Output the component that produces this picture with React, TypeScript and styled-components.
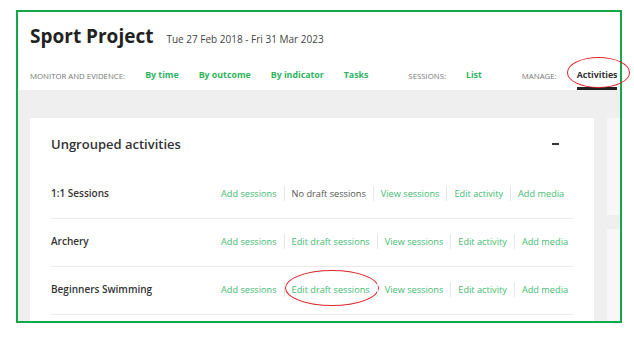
import React from 'react'
import styled, { createGlobalStyle } from 'styled-components'

const GlobalStyle = createGlobalStyle`
    html, body {
        margin: 0;
        padding: 0;
        background: #fff;
        font-family: 'Open Sans', 'Liberation Sans', sans-serif;
    }
`

type Action = { label: string; muted?: boolean; circled?: boolean }
type Activity = { name: string; actions: Action[] }

const activities: Activity[] = [
    {
        name: '1:1 Sessions',
        actions: [
            { label: 'Add sessions' },
            { label: 'No draft sessions', muted: true },
            { label: 'View sessions' },
            { label: 'Edit activity' },
            { label: 'Add media' },
        ],
    },
    {
        name: 'Archery',
        actions: [
            { label: 'Add sessions' },
            { label: 'Edit draft sessions' },
            { label: 'View sessions' },
            { label: 'Edit activity' },
            { label: 'Add media' },
        ],
    },
    {
        name: 'Beginners Swimming',
        actions: [
            { label: 'Add sessions' },
            { label: 'Edit draft sessions', circled: true },
            { label: 'View sessions' },
            { label: 'Edit activity' },
            { label: 'Add media' },
        ],
    },
]

const App = () => {
    return (
        <Page>
            <GlobalStyle />
            <Frame>
                <Header>
                    <TitleRow>
                        <Title>Sport Project</Title>
                        <Dates>Tue 27 Feb 2018 - Fri 31 Mar 2023</Dates>
                    </TitleRow>
                    <Nav>
                        <NavGroup>
                            <NavLabel>Monitor and evidence:</NavLabel>
                            <NavLink>By time</NavLink>
                            <NavLink>By outcome</NavLink>
                            <NavLink>By indicator</NavLink>
                            <NavLink>Tasks</NavLink>
                        </NavGroup>
                        <NavGroup>
                            <NavLabel>Sessions:</NavLabel>
                            <NavLink>List</NavLink>
                        </NavGroup>
                        <NavGroup>
                            <NavLabel>Manage:</NavLabel>
                            <NavLink $active>
                                Activities
                                <NavCircle />
                            </NavLink>
                        </NavGroup>
                    </Nav>
                </Header>
                <Body>
                    <Card>
                        <CardHeader>
                            <CardTitle>Ungrouped activities</CardTitle>
                            <Collapse />
                        </CardHeader>
                        {activities.map((a) => (
                            <Row key={a.name}>
                                <RowName>{a.name}</RowName>
                                <Actions>
                                    {a.actions.map((act) => (
                                        <ActionLink key={act.label} $muted={act.muted}>
                                            {act.label}
                                            {act.circled && <ActionCircle />}
                                        </ActionLink>
                                    ))}
                                </Actions>
                            </Row>
                        ))}
                    </Card>
                    <Side>
                        <SideCard $height={127} />
                        <SideCard $height={120} />
                    </Side>
                </Body>
            </Frame>
        </Page>
    )
}

export default App

const Page = styled.div`
    padding: 10px 0 0 16px;
    width: 634px;
    height: 339px;
    box-sizing: border-box;
`

const Frame = styled.div`
    width: 606px;
    height: 313px;
    box-sizing: border-box;
    border: 2px solid #12a84a;
    display: flex;
    flex-direction: column;
`

const Header = styled.div`
    background: #fff;
    padding: 0 12px;
    white-space: nowrap;
`

const TitleRow = styled.div`
    display: flex;
    align-items: baseline;
    gap: 13px;
    padding-top: 10px;
    height: 38px;
    box-sizing: border-box;
`

const Title = styled.h1`
    margin: 0;
    font-size: 19px;
    font-weight: 700;
    color: #222;
    line-height: 28px;
`

const Dates = styled.span`
    font-size: 10px;
    color: #444;
`

const Nav = styled.div`
    display: flex;
    gap: 40px;
    height: 40px;
`

const NavGroup = styled.div`
    display: flex;
    gap: 20px;
    align-items: stretch;
`

const NavLabel = styled.span`
    display: flex;
    align-items: center;
    padding-top: 14px;
    padding-bottom: 3px;
    font-size: 7.8px;
    text-transform: uppercase;
    color: #777;
`

const NavLink = styled.span<{ $active?: boolean }>`
    position: relative;
    display: flex;
    align-items: center;
    padding-top: 12px;
    font-size: 8.8px;
    font-weight: 700;
    color: ${(p) => (p.$active ? '#333' : '#2fb45f')};
    border-bottom: 3px solid ${(p) => (p.$active ? '#222' : 'transparent')};
`

const NavCircle = styled.span`
    position: absolute;
    left: -10px;
    right: -13px;
    top: 7px;
    bottom: -1px;
    border: 1px solid #e0262b;
    border-radius: 50%;
`

const Body = styled.div`
    flex: 1;
    overflow: hidden;
    background: #efefef;
    display: flex;
    gap: 13px;
    padding: 28px 0 0 12px;
`

const Card = styled.div`
    width: 564px;
    flex-shrink: 0;
    background: #fff;
    padding: 0 21px;
    box-sizing: border-box;
`

const CardHeader = styled.div`
    display: flex;
    align-items: center;
    justify-content: space-between;
    height: 53px;
    padding: 0 14px 2px 0;
    box-sizing: border-box;
`

const CardTitle = styled.h2`
    margin: 0;
    font-size: 13px;
    font-weight: 600;
    color: #333;
`

const Collapse = styled.span`
    width: 7px;
    height: 2px;
    background: #333;
`

const Row = styled.div`
    display: flex;
    align-items: center;
    height: 48px;
    box-sizing: border-box;
    padding-bottom: 3px;
    border-bottom: 1px solid #ebebeb;
    white-space: nowrap;
`

const RowName = styled.span`
    width: 170px;
    flex-shrink: 0;
    font-size: 10px;
    font-weight: 600;
    color: #333;
`

const Actions = styled.div`
    display: flex;
    align-items: center;
`

const ActionLink = styled.span<{ $muted?: boolean }>`
    position: relative;
    font-size: 9.2px;
    line-height: 15px;
    padding: 0 7px;
    color: ${(p) => (p.$muted ? '#555' : '#45bb72')};
    border-left: 1px solid #e6e6e6;

    &:first-child {
        padding-left: 0;
        border-left: none;
    }
`

const ActionCircle = styled.span`
    position: absolute;
    left: 0;
    right: -2px;
    top: -12px;
    bottom: -9px;
    border: 1px solid #e0262b;
    border-radius: 50%;
`

const Side = styled.div`
    flex: 1;
    display: flex;
    flex-direction: column;
    gap: 14px;
`

const SideCard = styled.div<{ $height: number }>`
    height: ${(p) => p.$height}px;
    background: #f7f7f7;
`
